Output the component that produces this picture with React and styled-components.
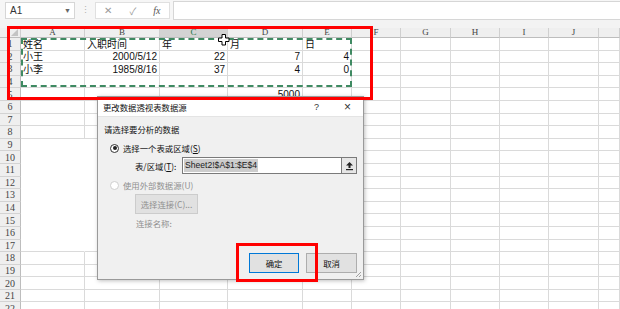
import React from "react";
import styled, { createGlobalStyle } from "styled-components";

const GlobalStyle = createGlobalStyle`
  html, body { margin: 0; padding: 0; background: #fff; }
  body { font-family: "Liberation Sans", "Noto Sans CJK SC", sans-serif; }
`;

const Screen = styled.div`
  position: relative;
  width: 620px;
  height: 309px;
  overflow: hidden;
  display: flex;
  flex-direction: column;
  background: #fff;
`;

/* ---------- formula bar ---------- */

const FormulaBar = styled.div`
  height: 20px;
  flex: none;
  display: flex;
  align-items: center;
  padding-left: 5px;
  background: #f6f6f6;
`;

const NameBox = styled.div`
  width: 70px;
  height: 17px;
  box-sizing: border-box;
  display: flex;
  align-items: center;
  justify-content: space-between;
  padding: 0 3px 0 4px;
  background: #fff;
  border: 1px solid #d6d6d6;
  font-size: 10px;
  color: #333;
`;

const Caret = styled.span`
  font-size: 7px;
  color: #666;
`;

const Grip = styled.div`
  width: 20px;
  display: flex;
  justify-content: center;
  font-size: 9px;
  color: #b0b0b0;
`;

const FxTools = styled.div`
  width: 75px;
  height: 17px;
  box-sizing: border-box;
  display: flex;
  align-items: center;
  justify-content: space-around;
  background: #fff;
  border: 1px solid #e0e0e0;
  color: #9a9a9a;
  font-size: 10px;
`;

const FxMark = styled.span`
  font-family: "Liberation Serif", serif;
  font-style: italic;
  font-size: 10px;
  color: #555;
`;

const FormulaInput = styled.div`
  flex: 1;
  height: 17px;
  margin-left: 3px;
  background: #fff;
  border: 1px solid #d6d6d6;
  border-right: none;
`;

const Spacer = styled.div`
  height: 8px;
  flex: none;
  background: #f3f3f3;
`;

/* ---------- sheet ---------- */

const Sheet = styled.div`
  display: grid;
  grid-template-columns: 21px 64px 75px 68px 75px 49px 49px 50px 49px 49px 50px 1fr;
  grid-template-rows: 10px;
  grid-auto-rows: 12.6px;
`;

const ColHead = styled.div`
  box-sizing: border-box;
  display: flex;
  align-items: center;
  justify-content: center;
  background: ${(p) => (p.$active ? "#d3d3d3" : "#efefef")};
  color: ${(p) => (p.$active ? "#217346" : "#444")};
  border-right: 1px solid #cfcfcf;
  border-bottom: 1px solid #bdbdbd;
  font-family: "Liberation Serif", serif;
  font-size: 9px;
  line-height: 9px;
`;

const Corner = styled(ColHead)`
  position: relative;
  &::after {
    content: "";
    position: absolute;
    right: 2px;
    bottom: 1px;
    border-left: 7px solid transparent;
    border-bottom: 7px solid #c4c4c4;
  }
`;

const RowHead = styled.div`
  box-sizing: border-box;
  display: flex;
  align-items: center;
  justify-content: center;
  background: #efefef;
  color: #444;
  border-right: 1px solid #bdbdbd;
  border-bottom: 1px solid #d3d3d3;
  font-family: "Liberation Serif", serif;
  font-size: 10px;
`;

const Cell = styled.div`
  box-sizing: border-box;
  display: flex;
  align-items: flex-end;
  justify-content: ${(p) => (p.$num ? "flex-end" : "flex-start")};
  padding: 0 2px;
  white-space: nowrap;
  border-right: 1px solid ${(p) => (p.$bare ? "transparent" : "#dadada")};
  border-bottom: 1px solid ${(p) => (p.$open ? "transparent" : "#dadada")};
  font-size: 10px;
  line-height: 11px;
  color: #111;
`;

/* ---------- overlays ---------- */

const Marquee = styled.div`
  position: absolute;
  left: 21px;
  top: 38px;
  width: 331px;
  height: 49px;
  box-sizing: border-box;
  border: 2px dashed #3f8a62;
  pointer-events: none;
`;

const RedFrame = styled.div`
  position: absolute;
  box-sizing: border-box;
  border: 3px solid #ff0000;
  z-index: 5;
  pointer-events: none;
`;

const Pointer = styled.svg`
  position: absolute;
  left: 218px;
  top: 34px;
  z-index: 3;
`;

/* ---------- dialog ---------- */

const Dialog = styled.div`
  position: absolute;
  left: 97px;
  top: 96px;
  width: 267px;
  height: 184px;
  box-sizing: border-box;
  display: flex;
  flex-direction: column;
  background: #f0f0f0;
  border: 1px solid #9a9a9a;
  box-shadow: 1px 1px 4px rgba(0, 0, 0, 0.25);
  z-index: 4;
  font-family: "Noto Sans CJK SC", sans-serif;
  font-size: 8.4px;
  color: #111;
`;

const TitleBar = styled.div`
  height: 19px;
  flex: none;
  display: flex;
  align-items: center;
  justify-content: space-between;
  padding: 0 0 0 5px;
  background: #fff;
`;

const TitleBtns = styled.div`
  display: flex;
  align-items: center;
`;

const TitleBtn = styled.span`
  width: 31px;
  text-align: center;
  font-family: "Liberation Sans", sans-serif;
  font-size: ${(p) => (p.$big ? "12px" : "9px")};
  color: #333;
`;

const Body = styled.div`
  position: relative;
  flex: 1;
  display: flex;
  flex-direction: column;
  padding: 0 6px 6px 6px;
  border-top: 1px solid #e4e4e4;
`;

const Line = styled.div`
  height: 12px;
  display: flex;
  align-items: center;
  margin-top: ${(p) => p.$mt || 0}px;
  margin-left: ${(p) => p.$ml || 0}px;
  color: ${(p) => (p.$off ? "#8f8f8f" : "#111")};
`;

const Radio = styled.span`
  width: 9px;
  height: 9px;
  box-sizing: border-box;
  border-radius: 50%;
  border: 1px solid ${(p) => (p.$off ? "#cfcfcf" : "#333")};
  background: #fff;
  margin-right: 4px;
  display: flex;
  align-items: center;
  justify-content: center;
  &::after {
    content: "";
    width: 4px;
    height: 4px;
    border-radius: 50%;
    background: ${(p) => (p.$on ? "#222" : "transparent")};
  }
`;

const Key = styled.span`
  text-decoration: underline;
`;

const FieldRow = styled.div`
  display: flex;
  align-items: center;
  height: 17px;
  margin-top: 3px;
  margin-left: 31px;
`;

const FieldLabel = styled.span`
  width: 47px;
`;

const RangeBox = styled.div`
  flex: 1;
  height: 17px;
  box-sizing: border-box;
  display: flex;
  align-items: center;
  padding-left: 1px;
  background: #fff;
  border: 1px solid #7a7a7a;
`;

const Selected = styled.span`
  background: #cdcdcd;
  font-family: "Liberation Sans", sans-serif;
  font-size: 8.6px;
  line-height: 13px;
  padding: 0 1px;
  color: #222;
`;

const RefBtn = styled.div`
  width: 15px;
  height: 17px;
  box-sizing: border-box;
  display: flex;
  align-items: center;
  justify-content: center;
  background: #e6e6e6;
  border: 1px solid #7a7a7a;
  border-left: none;
`;

const Button = styled.div`
  width: ${(p) => p.$w}px;
  height: 20px;
  box-sizing: border-box;
  display: flex;
  align-items: center;
  justify-content: center;
  background: #e1e1e1;
  border: 1px solid ${(p) => (p.$focus ? "#0078d7" : p.$off ? "#cccccc" : "#adadad")};
  color: ${(p) => (p.$off ? "#8f8f8f" : "#111")};
`;

const ConnBtn = styled(Button)`
  margin-top: 3px;
  margin-left: 31px;
`;

const Footer = styled.div`
  margin-top: auto;
  display: flex;
  justify-content: flex-end;
  gap: 7px;
`;

const SizeGrip = styled.svg`
  position: absolute;
  right: 1px;
  bottom: 1px;
`;

const columns = ["A", "B", "C", "D", "E", "F", "G", "H", "I", "J", ""];

const data = {
  1: ["姓名", "入职时间", "年", "月", "日"],
  2: ["小王", "2000/5/12", "22", "7", "4"],
  3: ["小李", "1985/8/16", "37", "4", "0"],
  5: ["", "", "", "5000", ""],
};

const ROWS = 22;

export default function App() {
  const rows = [];
  for (let r = 1; r <= ROWS; r++) {
    rows.push(<RowHead key={`h${r}`}>{r}</RowHead>);
    const values = data[r] || [];
    columns.forEach((c, i) => {
      const v = values[i] || "";
      const num = v !== "" && /^[\d/]+$/.test(v);
      // repaint glitch left of the dialog: no grid lines there
      const hole = r >= 9 && r <= 16 && i < 2;
      const bare = r >= 9 && r <= 17 && i === 0;
      rows.push(
        <Cell key={`${r}-${i}`} $num={num} $open={hole} $bare={bare}>
          {v}
        </Cell>
      );
    });
  }

  return (
    <Screen>
      <GlobalStyle />
      <FormulaBar>
        <NameBox>
          A1<Caret>▼</Caret>
        </NameBox>
        <Grip>⋮</Grip>
        <FxTools>
          <span>✕</span>
          <span>✓</span>
          <FxMark>fx</FxMark>
        </FxTools>
        <FormulaInput />
      </FormulaBar>
      <Spacer />
      <Sheet>
        <Corner />
        {columns.map((c) => (
          <ColHead key={c || "k"} $active={c === "C"}>
            {c}
          </ColHead>
        ))}
        {rows}
      </Sheet>

      <Marquee />
      <RedFrame style={{ left: 7, top: 26, width: 366, height: 74 }} />
      <Pointer width="12" height="12" viewBox="0 0 12 12">
        <polygon
          points="4,0.5 7.5,0.5 7.5,4 11,4 11,7.5 7.5,7.5 7.5,11 4,11 4,7.5 0.5,7.5 0.5,4 4,4"
          fill="#fff"
          stroke="#000"
          strokeWidth="1"
        />
      </Pointer>

      <Dialog>
        <TitleBar>
          <span>更改数据透视表数据源</span>
          <TitleBtns>
            <TitleBtn>?</TitleBtn>
            <TitleBtn $big>×</TitleBtn>
          </TitleBtns>
        </TitleBar>
        <Body>
          <Line $mt={6}>请选择要分析的数据</Line>
          <Line $mt={7} $ml={6}>
            <Radio $on />
            选择一个表或区域(<Key>S</Key>)
          </Line>
          <FieldRow>
            <FieldLabel>
              表/区域(<Key>T</Key>):
            </FieldLabel>
            <RangeBox>
              <Selected>Sheet2!$A$1:$E$4</Selected>
            </RangeBox>
            <RefBtn>
              <svg width="9" height="10" viewBox="0 0 9 10">
                <path d="M4.5 1 L8 4.5 L5.5 4.5 L5.5 7 L3.5 7 L3.5 4.5 L1 4.5 Z" fill="#222" />
                <rect x="1" y="8" width="7" height="1.2" fill="#222" />
              </svg>
            </RefBtn>
          </FieldRow>
          <Line $mt={5} $ml={6} $off>
            <Radio $off />
            使用外部数据源(U)
          </Line>
          <ConnBtn $w={63} $off>
            选择连接(C)...
          </ConnBtn>
          <Line $mt={3} $ml={32} $off>
            连接名称:
          </Line>
          <Footer>
            <Button $w={50} $focus>
              确定
            </Button>
            <Button $w={51}>取消</Button>
          </Footer>
          <SizeGrip width="8" height="8" viewBox="0 0 8 8">
            <path d="M7 2 L2 7 M7 5 L5 7" stroke="#a0a0a0" strokeWidth="1" />
          </SizeGrip>
        </Body>
      </Dialog>
      <RedFrame style={{ left: 236, top: 243, width: 82, height: 39 }} />
    </Screen>
  );
}
